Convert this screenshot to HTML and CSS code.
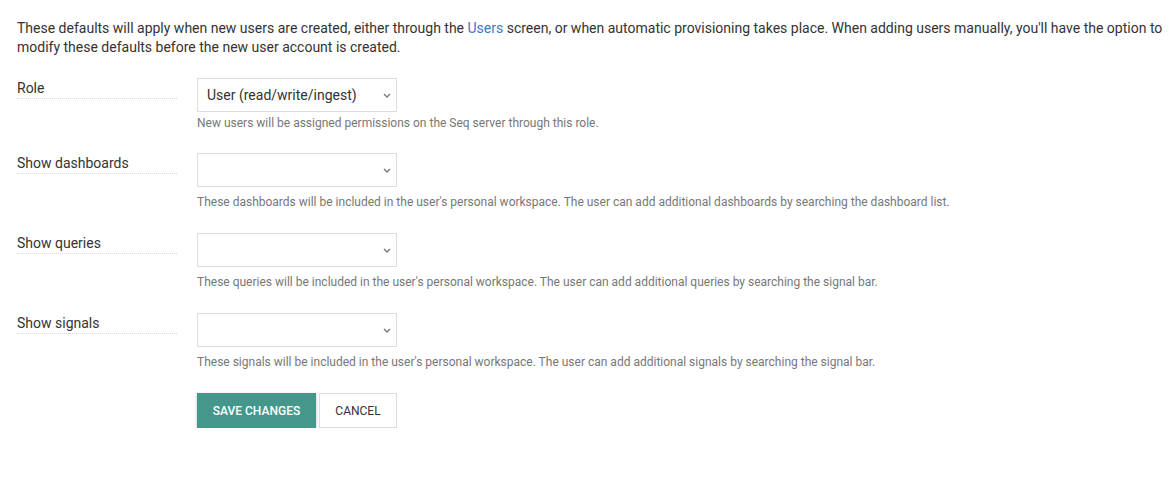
FILE: index.html
```html
<!DOCTYPE html>
<html lang="en">
<head>
<meta charset="utf-8">
<title>User defaults</title>
<link rel="stylesheet" href="styles.css">
</head>
<body>
<div class="page">
  <p class="intro">These defaults will apply when new users are created, either through the <a href="#" class="link">Users</a> screen, or when automatic provisioning takes place. When adding users manually, you'll have the option to modify these defaults before the new user account is created.</p>

  <div class="row row-role">
    <div class="label"><span>Role</span></div>
    <div class="field">
      <div class="select-wrap">
        <select class="select"><option>User (read/write/ingest)</option></select>
        <svg class="chev" viewBox="0 0 8 5" width="8" height="5"><path d="M1 1 L4 4 L7 1" fill="none" stroke="#777" stroke-width="1.4"/></svg>
      </div>
      <div class="help help-tight">New users will be assigned permissions on the Seq server through this role.</div>
    </div>
  </div>

  <div class="row">
    <div class="label"><span>Show dashboards</span></div>
    <div class="field">
      <div class="select-wrap">
        <select class="select"><option></option></select>
        <svg class="chev" viewBox="0 0 8 5" width="8" height="5"><path d="M1 1 L4 4 L7 1" fill="none" stroke="#777" stroke-width="1.4"/></svg>
      </div>
      <div class="help">These dashboards will be included in the user's personal workspace. The user can add additional dashboards by searching the dashboard list.</div>
    </div>
  </div>

  <div class="row">
    <div class="label"><span>Show queries</span></div>
    <div class="field">
      <div class="select-wrap">
        <select class="select"><option></option></select>
        <svg class="chev" viewBox="0 0 8 5" width="8" height="5"><path d="M1 1 L4 4 L7 1" fill="none" stroke="#777" stroke-width="1.4"/></svg>
      </div>
      <div class="help">These queries will be included in the user's personal workspace. The user can add additional queries by searching the signal bar.</div>
    </div>
  </div>

  <div class="row">
    <div class="label"><span>Show signals</span></div>
    <div class="field">
      <div class="select-wrap">
        <select class="select"><option></option></select>
        <svg class="chev" viewBox="0 0 8 5" width="8" height="5"><path d="M1 1 L4 4 L7 1" fill="none" stroke="#777" stroke-width="1.4"/></svg>
      </div>
      <div class="help">These signals will be included in the user's personal workspace. The user can add additional signals by searching the signal bar.</div>
    </div>
  </div>

  <div class="actions">
    <button class="btn btn-primary">SAVE CHANGES</button>
    <button class="btn btn-default">CANCEL</button>
  </div>
</div>
</body>
</html>
```

FILE: styles.css
```css
html, body {
  margin: 0;
  padding: 0;
  background: #ffffff;
}

body {
  font-family: Roboto, "Liberation Sans", Arial, sans-serif;
  font-size: 14px;
  color: #333333;
}

.page {
  padding: 19px 10px 0 17px;
}

.intro {
  margin: 0 0 21px 0;
  line-height: 19px;
}

.link {
  color: #3a78c9;
  text-decoration: none;
}

.row {
  display: flex;
  align-items: flex-start;
  margin-bottom: 23px;
}

.row-role {
  margin-bottom: 22px;
}

.label {
  width: 160px;
  flex: 0 0 160px;
  margin-right: 20px;
  height: 20px;
  line-height: 20px;
  border-bottom: 1px dotted #dadada;
  color: #333333;
}

.field {
  display: flex;
  flex-direction: column;
}

.select-wrap {
  position: relative;
  width: 200px;
  height: 34px;
}

.select {
  appearance: none;
  -webkit-appearance: none;
  box-sizing: border-box;
  width: 200px;
  height: 34px;
  margin: 0;
  padding: 0 24px 0 9px;
  border: 1px solid #dddddd;
  border-radius: 0;
  background: #ffffff;
  font-family: Roboto, "Liberation Sans", Arial, sans-serif;
  font-size: 14px;
  color: #333333;
  outline: none;
}

.chev {
  position: absolute;
  right: 6px;
  top: 15px;
  pointer-events: none;
}

.help {
  margin-top: 7px;
  font-size: 12px;
  line-height: 16px;
  color: #777777;
  white-space: nowrap;
}

.help-tight {
  margin-top: 3px;
}

.actions {
  display: flex;
  gap: 3px;
  margin-left: 180px;
}

.btn {
  box-sizing: border-box;
  height: 35px;
  margin: 0;
  border-radius: 0;
  font-family: Roboto, "Liberation Sans", Arial, sans-serif;
  font-size: 12px;
  font-weight: 500;
  cursor: pointer;
}

.btn-primary {
  width: 119px;
  background: #45978b;
  color: #ffffff;
  border: none;
  box-shadow: 0 1px 3px rgba(0, 0, 0, 0.25);
}

.btn-default {
  width: 78px;
  background: #ffffff;
  color: #333333;
  border: 1px solid #dddddd;
  font-weight: 400;
}
```
